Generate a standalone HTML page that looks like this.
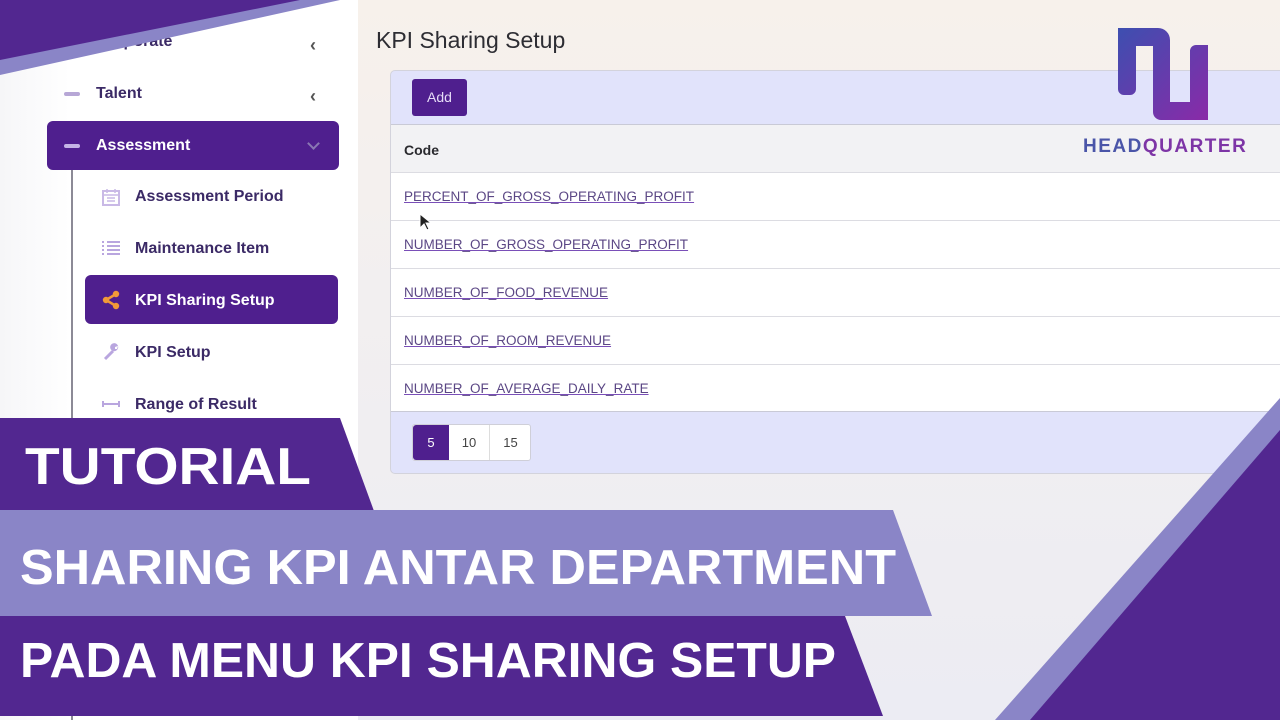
<!DOCTYPE html>
<html><head><meta charset="utf-8"><style>
*{margin:0;padding:0;box-sizing:border-box}
body{width:1280px;height:720px;overflow:hidden;position:relative;font-family:"Liberation Sans",sans-serif;background:linear-gradient(#f7f1eb 0px,#f2eff0 300px,#ececf3 720px)}
.side{position:absolute;left:0;top:0;width:358px;height:720px;background:linear-gradient(90deg,#f6f6f8 0,#fff 70px)}
.it{position:absolute;font-size:16px;font-weight:bold;color:#3b2a66}
.vl{position:absolute;left:71px;top:170px;width:2px;height:550px;background:#8c8a96}
.card{position:absolute;left:390px;top:70px;width:900px;height:404px;border:1px solid #d3d3dc;border-radius:5px;background:#e1e3fb;overflow:hidden}
.row{position:absolute;left:0;width:900px;height:48px;background:#fff;border-top:1px solid #dcdce2}
.row a{position:absolute;left:13px;top:16px;font-size:13.5px;color:#5b4785;text-decoration:underline;text-decoration-color:#7a4fb8}
</style></head><body>
<div class="side">
  <div class="it" style="left:96px;top:33px">Corporate</div>
  <div style="position:absolute;left:310px;top:35px;font-size:18px;color:#555;font-weight:bold">‹</div>
  <div style="position:absolute;left:64px;top:92px;width:16px;height:4px;background:#b7a7d6;border-radius:2px"></div>
  <div class="it" style="left:96px;top:85px">Talent</div>
  <div style="position:absolute;left:310px;top:86px;font-size:18px;color:#555;font-weight:bold">‹</div>
  <div style="position:absolute;left:47px;top:121px;width:292px;height:49px;background:#4f1f8e;border-radius:6px"></div>
  <div style="position:absolute;left:64px;top:144px;width:16px;height:4px;background:#c5b4e6;border-radius:2px"></div>
  <div class="it" style="left:96px;top:137px;color:#fff">Assessment</div>
  <div style="position:absolute;left:309px;top:139px;width:9px;height:9px;border-right:2px solid #8a77b3;border-bottom:2px solid #8a77b3;transform:rotate(45deg)"></div>
  <div class="vl"></div>
  <svg style="position:absolute;left:101px;top:187px" width="20" height="20"><rect x="2" y="4" width="16" height="14" fill="none" stroke="#c9b9e6" stroke-width="2"/><path d="M2 8h16M6 11h8M6 14h8M6 2v4M14 2v4" stroke="#c9b9e6" stroke-width="1.5"/></svg>
  <div class="it" style="left:135px;top:188px">Assessment Period</div>
  <svg style="position:absolute;left:101px;top:239px" width="20" height="18"><path d="M1 3h2M6 3h13M1 7h2M6 7h13M1 11h2M6 11h13M1 15h2M6 15h13" stroke="#b9a6df" stroke-width="2"/></svg>
  <div class="it" style="left:135px;top:240px">Maintenance Item</div>
  <div style="position:absolute;left:85px;top:275px;width:253px;height:49px;background:#4f1f8e;border-radius:6px"></div>
  <svg style="position:absolute;left:101px;top:290px" width="20" height="20"><path d="M15 4L5 10L15 16" stroke="#f29a38" stroke-width="2.5" fill="none"/><circle cx="15" cy="4" r="3.2" fill="#f29a38"/><circle cx="5" cy="10" r="3.2" fill="#f29a38"/><circle cx="15" cy="16" r="3.2" fill="#f29a38"/></svg>
  <div class="it" style="left:135px;top:292px;color:#fff">KPI Sharing Setup</div>
  <svg style="position:absolute;left:102px;top:342px" width="20" height="20"><path d="M3 17L11 9" stroke="#b9a6df" stroke-width="3"/><path d="M11 9a4 4 0 1 1 5 -5l-3 1 0 2 2 0 1-3a4 4 0 0 1 -5 5" fill="#b9a6df"/></svg>
  <div class="it" style="left:135px;top:344px">KPI Setup</div>
  <svg style="position:absolute;left:101px;top:398px" width="20" height="12"><path d="M2 6h16M2 3v6M18 3v6" stroke="#b9a6df" stroke-width="2"/></svg>
  <div class="it" style="left:135px;top:396px">Range of Result</div>
  <div class="it" style="left:135px;top:550px;color:#9a92b0">Guest Room</div>
  <div class="it" style="left:135px;top:602px;color:#aaa3bd">Guest Complaint</div>
</div>
<div style="position:absolute;left:376px;top:27px;font-size:23px;color:#2d2d33">KPI Sharing Setup</div>
<div class="card">
  <div style="position:absolute;left:21px;top:8px;width:55px;height:37px;background:#4f1f8e;border-radius:3px;color:#e6dcf7;font-size:14px;text-align:center;line-height:37px">Add</div>
  <div class="row" style="top:53px;background:#f2f2f4;border-top:1px solid #c9cad6"><b style="position:absolute;left:13px;top:17px;font-size:14px;color:#2a2a2e">Code</b></div>
  <div class="row" style="top:101px"><a>PERCENT_OF_GROSS_OPERATING_PROFIT</a></div>
  <div class="row" style="top:149px"><a>NUMBER_OF_GROSS_OPERATING_PROFIT</a></div>
  <div class="row" style="top:197px"><a>NUMBER_OF_FOOD_REVENUE</a></div>
  <div class="row" style="top:245px"><a>NUMBER_OF_ROOM_REVENUE</a></div>
  <div class="row" style="top:293px"><a>NUMBER_OF_AVERAGE_DAILY_RATE</a></div>
  <div style="position:absolute;left:0;top:340px;width:900px;height:1px;background:#c9cad6"></div>
  <div style="position:absolute;left:21px;top:353px;width:119px;height:37px;background:#fff;border:1px solid #cfcfd8;border-radius:3px;font-size:13px;color:#444">
    <div style="position:absolute;left:0;top:0;width:36px;height:35px;background:#4f1f8e;color:#fff;text-align:center;line-height:35px;border-radius:3px 0 0 3px">5</div>
    <div style="position:absolute;left:36px;top:0;width:41px;height:35px;text-align:center;line-height:35px;border-right:1px solid #ddd">10</div>
    <div style="position:absolute;left:77px;top:0;width:41px;height:35px;text-align:center;line-height:35px">15</div>
  </div>
</div>
<svg style="position:absolute;left:419px;top:213px" width="12" height="18"><path d="M1 1v14l4-4 3 6 2-1-3-6h5z" fill="#222" stroke="#fff" stroke-width="1"/></svg>
<svg style="position:absolute;left:0;top:0" width="1280" height="720">
  <defs><linearGradient id="g" x1="1118" y1="28" x2="1208" y2="120" gradientUnits="userSpaceOnUse"><stop offset="0" stop-color="#3d4fb0"/><stop offset="1" stop-color="#8a2aa8"/></linearGradient></defs>
  <path d="M1118 28H1158A12 12 0 0 1 1170 40V102H1190V51A6 6 0 0 1 1196 45H1208V120H1161A8 8 0 0 1 1153 112V46H1136V89A6 6 0 0 1 1130 95H1124A6 6 0 0 1 1118 89Z" fill="url(#g)"/>
  <polygon points="0,0 340,0 0,75" fill="#8a85c7"/>
  <polygon points="0,0 300,0 0,60" fill="#522790"/>
  <polygon points="995,720 1280,398 1280,720" fill="#8a85c7"/>
  <polygon points="1030,720 1280,430 1280,720" fill="#522790"/>
  <polygon points="0,418 340,418 378,522 0,522" fill="#522790"/>
  <polygon points="0,510 893,510 932,616 0,616" fill="#8a85c7"/>
  <polygon points="0,616 845,616 883,716 0,716" fill="#522790"/>
  <g font-family="Liberation Sans" font-weight="bold" fill="#fff">
    <text x="25" y="484" font-size="52" textLength="286" lengthAdjust="spacingAndGlyphs">TUTORIAL</text>
    <text x="20" y="584" font-size="49" textLength="876" lengthAdjust="spacingAndGlyphs">SHARING KPI ANTAR DEPARTMENT</text>
    <text x="20" y="677" font-size="49" textLength="816" lengthAdjust="spacingAndGlyphs">PADA MENU KPI SHARING SETUP</text>
  </g>
</svg>
<div style="position:absolute;left:1083px;top:136px;font-size:19px;font-weight:bold;letter-spacing:1.5px;color:#4a55a8">HEAD<span style="color:#7d35a6">QUARTER</span></div>
</body></html>
